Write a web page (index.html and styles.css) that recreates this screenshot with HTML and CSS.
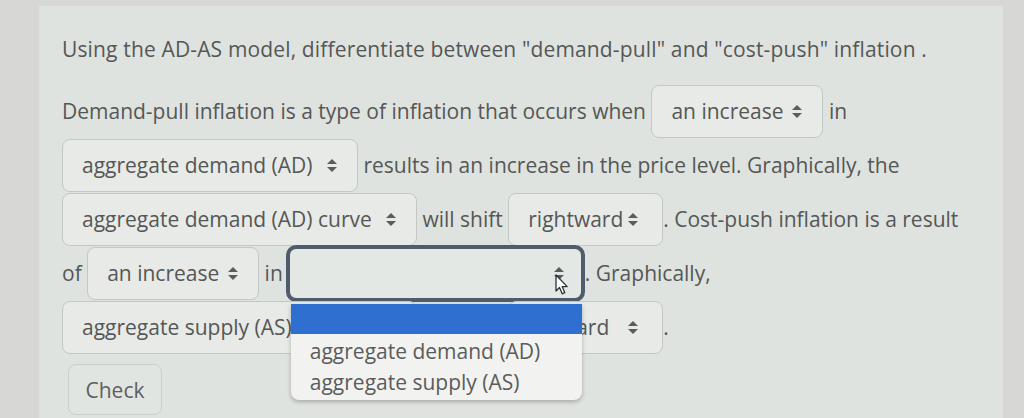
FILE: index.html
```html
<!DOCTYPE html>
<html lang="en">
<head>
  <meta charset="UTF-8" />
  <meta name="viewport" content="width=device-width, initial-scale=1.0"/>
  <title>AD-AS Inflation</title>
  <link rel="stylesheet" href="styles.css">
</head>
<body>
  <div class="panel">
    <p class="question">Using the AD-AS model, differentiate between "demand-pull" and "cost-push" inflation .</p>
    <div class="answer">
      Demand-pull inflation is a type of inflation that occurs when
      <span class="sel sel-change">an increase <i class="arrows"></i></span>
      in
      <span class="sel sel-agg">aggregate demand (AD) <i class="arrows"></i></span>
      results in an increase in the price level. Graphically, the
      <span class="sel sel-curve">aggregate demand (AD) curve <i class="arrows"></i></span>
      will shift
      <span class="sel sel-dir">rightward <i class="arrows"></i></span>.
      Cost-push inflation is a result
      of
      <span class="sel sel-change">an increase <i class="arrows"></i></span>
      in<span class="sel focused">&nbsp;<i class="arrows"></i>
        <svg class="cursor" width="14" height="22" viewBox="0 0 14 22">
          <path d="M1 1 L1 17 L4.5 13.5 L7.2 19.8 L9.8 18.7 L7.2 12.6 L12.2 12.6 Z" fill="#fff" stroke="#2e3136" stroke-width="1.3" stroke-linejoin="round"/>
        </svg>
        <div class="menu">
          <div class="opt active"></div>
          <div class="opt">aggregate demand (AD)</div>
          <div class="opt">aggregate supply (AS)</div>
        </div>
      </span>. Graphically,
      <span class="sel sel-curve">aggregate supply (AS) curve <i class="arrows"></i></span>
      will shift
      <span class="sel sel-dir">leftward <i class="arrows"></i></span>.
    </div>
    <button class="check">Check</button>
  </div>
</body>
</html>
```

FILE: styles.css
```css
body {
  margin: 0;
  background: #d7d8d5;
  font-family: "Open Sans", "Noto Sans", sans-serif;
  color: #555756;
  height: 418px;
  overflow: hidden;
}
.panel {
  margin-left: 39px;
  width: 964px;
  height: 412px;
  margin-top: 6px;
  background: #dfe3df;
  padding: 0 0 0 23px;
  box-sizing: border-box;
  font-size: 21px;
}
.question {
  margin: 0;
  padding-top: 28px;
  line-height: 30px;
  letter-spacing: 0.15px;
}
.answer {
  margin-top: 20px;
  line-height: 54px;
  width: 915px;
}
.sel {
  display: inline-flex;
  align-items: center;
  box-sizing: border-box;
  height: 53px;
  margin: -2px 0;
  line-height: 51px;
  padding: 0 20px 0 19px;
  border: 1px solid #c4c8c4;
  border-radius: 8px;
  background: #e7eae7;
  position: relative;
}
.sel-change { width: 172px; }
.sel-agg { width: 296px; }
.sel-curve { width: 355px; }
.sel-dir { width: 155px; padding-right: 24px; }
.arrows {
  display: inline-block;
  position: relative;
  width: 10px;
  height: 13px;
  margin-left: auto;
}
.arrows::before,
.arrows::after {
  content: "";
  position: absolute;
  left: 0;
  border-left: 5px solid transparent;
  border-right: 5px solid transparent;
}
.arrows::before {
  top: 0;
  border-bottom: 5px solid #5b5d5c;
}
.arrows::after {
  bottom: 0;
  border-top: 5px solid #5b5d5c;
}
.focused {
  width: 299px;
  border: 4px solid #4f5c6b;
  border-radius: 10px;
  height: 57px;
  margin-left: 3px;
  background: #e4e8e4;
  padding-right: 17px;
}
.cursor {
  position: absolute;
  right: 12px;
  top: 25px;
}
.menu {
  position: absolute;
  left: 1px;
  top: 55px;
  width: 291px;
  background: #f2f3f1;
  border-radius: 0 0 8px 8px;
  box-shadow: 0 2px 4px rgba(0, 0, 0, 0.25);
  line-height: 31px;
  padding-bottom: 2px;
  z-index: 2;
}
.opt {
  height: 31px;
  padding-left: 19px;
  color: #5a5c5b;
}
.opt.active {
  background: #2f6fd0;
  height: 30px;
  margin-bottom: 2px;
}
.check {
  margin: 10px 0 0 6px;
  width: 94px;
  height: 51px;
  font-family: inherit;
  font-size: 21px;
  color: #5d5f5e;
  background: #e1e5e1;
  border: 1px solid #cbcfcb;
  border-radius: 8px;
}
```
